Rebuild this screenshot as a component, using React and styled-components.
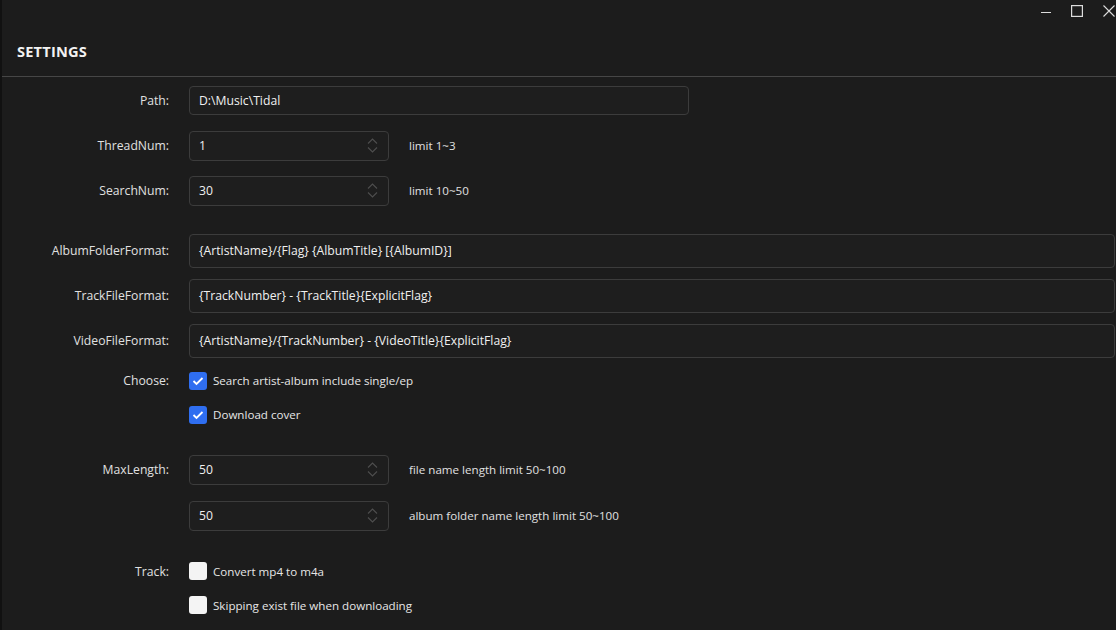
import React from 'react';
import styled, { createGlobalStyle } from 'styled-components';

const GlobalStyle = createGlobalStyle`
  html, body {
    margin: 0;
    padding: 0;
    background: #1c1c1c;
  }
  body {
    font-family: 'Open Sans', 'Noto Sans', sans-serif;
    font-size: 12px;
    color: #e6e6e6;
  }
`;

const Window = styled('div')`
  width: 1116px;
  height: 630px;
  box-sizing: border-box;
  border-left: 2px solid #111111;
  background: #1c1c1c;
  overflow: hidden;
  display: flex;
  flex-direction: column;
`;

const Header = styled('div')`
  height: 76px;
  border-bottom: 1px solid #464646;
  display: flex;
  flex-direction: column;
`;

const Controls = styled('div')`
  display: flex;
  justify-content: flex-end;
  align-items: center;
  height: 22px;
  gap: 20px;
  padding-right: 1px;
`;

const ControlButton = styled('div')`
  display: flex;
  align-items: center;
  justify-content: center;
  color: #dcdcdc;
`;

const Title = styled('h1')`
  margin: 0;
  padding: 19px 0 0 15px;
  font-size: 14.6px;
  font-weight: 700;
  letter-spacing: 0.2px;
  color: #f2f2f2;
`;

const Form = styled('div')`
  display: flex;
  flex-direction: column;
  padding-right: 1px;
`;

const Row = styled('div')`
  display: grid;
  grid-template-columns: 167px 1fr;
  column-gap: 20px;
  align-items: center;
  height: ${props => props.h || 45}px;
`;

const Spacer = styled('div')`
  height: ${props => props.h}px;
`;

const Label = styled('div')`
  text-align: right;
  font-size: 12.2px;
  color: #e0e0e0;
`;

const Field = styled('div')`
  display: flex;
  align-items: center;
  gap: 20px;
`;

const TextBox = styled('div')`
  box-sizing: border-box;
  width: ${props => (props.w ? props.w + 'px' : '100%')};
  height: ${props => props.h || 30}px;
  border: 1px solid #3c3c3c;
  border-radius: 4px;
  background: #1e1e1e;
  padding: 0 10px 0 9px;
  display: flex;
  align-items: center;
  justify-content: space-between;
  font-size: 12.2px;
  color: #f0f0f0;
`;

const Hint = styled('span')`
  font-size: 11.6px;
  color: #e0e0e0;
`;

const Check = styled('div')`
  display: flex;
  align-items: center;
  gap: 6px;
  font-size: 11.6px;
  color: #e6e6e6;
`;

const Box = styled('div')`
  box-sizing: border-box;
  width: 18px;
  height: 18px;
  border-radius: 3px;
  background: ${props => (props.checked ? '#2f6ef0' : '#f4f4f4')};
  display: flex;
  align-items: center;
  justify-content: center;
`;

function Spinner() {
  return (
    <svg width="11" height="17" viewBox="0 0 11 17" fill="none" stroke="#4e4e4e" strokeWidth="1.1">
      <path d="M1 6.5 L5.5 2 L10 6.5" />
      <path d="M1 10.5 L5.5 15 L10 10.5" />
    </svg>
  );
}

function CheckBox({ checked, children }) {
  return (
    <Check>
      <Box checked={checked}>
        {checked && (
          <svg width="12" height="10" viewBox="0 0 12 10" fill="none" stroke="#ffffff" strokeWidth="1.8">
            <path d="M1.5 5 L4.5 8 L10.5 2" />
          </svg>
        )}
      </Box>
      <span>{children}</span>
    </Check>
  );
}

function NumberBox({ value }) {
  return (
    <TextBox w={200} h={30}>
      <span>{value}</span>
      <Spinner />
    </TextBox>
  );
}

export default function App() {
  return (
    <Window>
      <GlobalStyle />
      <Header>
        <Controls>
          <ControlButton>
            <svg width="10" height="11" viewBox="0 0 10 11" stroke="#dcdcdc" strokeWidth="1">
              <path d="M0 6.5 H10" />
            </svg>
          </ControlButton>
          <ControlButton>
            <svg width="12" height="12" viewBox="0 0 12 12" fill="none" stroke="#dcdcdc" strokeWidth="1.2">
              <rect x="0.6" y="0.6" width="10.8" height="10.8" />
            </svg>
          </ControlButton>
          <ControlButton>
            <svg width="12" height="12" viewBox="0 0 12 12" fill="none" stroke="#dcdcdc" strokeWidth="1.1">
              <path d="M0.5 0.5 L11.5 11.5 M11.5 0.5 L0.5 11.5" />
            </svg>
          </ControlButton>
        </Controls>
        <Title>SETTINGS</Title>
      </Header>

      <Form>
        <Row h={46}>
          <Label>Path:</Label>
          <TextBox w={500} h={29}>D:\Music\Tidal</TextBox>
        </Row>
        <Row>
          <Label>ThreadNum:</Label>
          <Field>
            <NumberBox value="1" />
            <Hint>limit 1~3</Hint>
          </Field>
        </Row>
        <Row>
          <Label>SearchNum:</Label>
          <Field>
            <NumberBox value="30" />
            <Hint>limit 10~50</Hint>
          </Field>
        </Row>
        <Spacer h={15} />
        <Row>
          <Label>AlbumFolderFormat:</Label>
          <TextBox h={34}>{'{ArtistName}/{Flag} {AlbumTitle} [{AlbumID}]'}</TextBox>
        </Row>
        <Row>
          <Label>TrackFileFormat:</Label>
          <TextBox h={34}>{'{TrackNumber} - {TrackTitle}{ExplicitFlag}'}</TextBox>
        </Row>
        <Row>
          <Label>VideoFileFormat:</Label>
          <TextBox h={34}>{'{ArtistName}/{TrackNumber} - {VideoTitle}{ExplicitFlag}'}</TextBox>
        </Row>
        <Row h={35}>
          <Label>Choose:</Label>
          <CheckBox checked>Search artist-album include single/ep</CheckBox>
        </Row>
        <Row h={33}>
          <span />
          <CheckBox checked>Download cover</CheckBox>
        </Row>
        <Spacer h={16} />
        <Row>
          <Label>MaxLength:</Label>
          <Field>
            <NumberBox value="50" />
            <Hint>file name length limit 50~100</Hint>
          </Field>
        </Row>
        <Row h={47}>
          <span />
          <Field>
            <NumberBox value="50" />
            <Hint>album folder name length limit 50~100</Hint>
          </Field>
        </Row>
        <Spacer h={15} />
        <Row h={34}>
          <Label>Track:</Label>
          <CheckBox>Convert mp4 to m4a</CheckBox>
        </Row>
        <Row h={34}>
          <span />
          <CheckBox>Skipping exist file when downloading</CheckBox>
        </Row>
      </Form>
    </Window>
  );
}
